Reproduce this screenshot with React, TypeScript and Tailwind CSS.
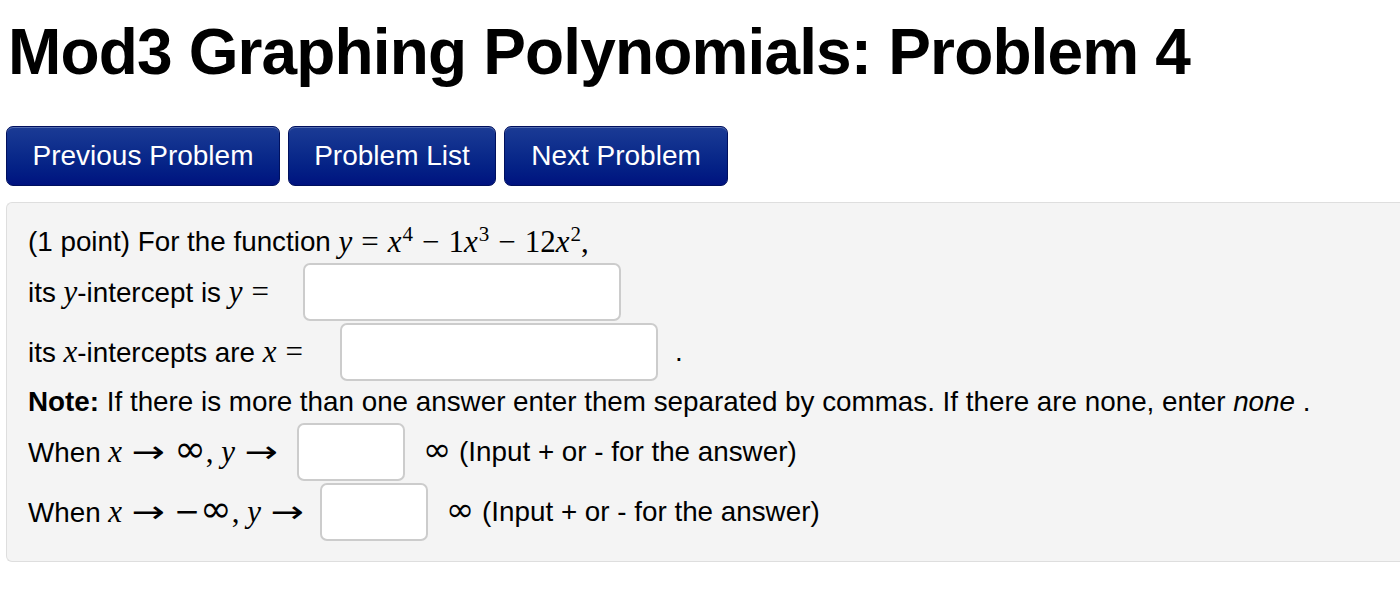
export default function App() {
  const sans = { fontFamily: '"Liberation Sans", Arial, sans-serif' };
  return (
    <div className="min-h-[608px] bg-white text-black" style={sans}>
      <h1 className="pl-[8px] pt-[16px] text-[64px] font-bold leading-[72px] tracking-[-0.85px]">
        Mod3 Graphing Polynomials: Problem 4
      </h1>

      <div className="mt-[38px] flex gap-[8px] pl-[6px]">
        <NavButton label="Previous Problem" w="w-[274px]" />
        <NavButton label="Problem List" w="w-[208px]" />
        <NavButton label="Next Problem" w="w-[224px]" />
      </div>

      <div className="ml-[6px] mt-[16px] rounded-l-[6px] border border-r-0 border-[#dedede] bg-[#f4f4f4] pb-[19px] pl-[21px] pt-[19px] text-[27.8px]">
        <div className="flex h-[40px] items-center">
          <span>(1 point) For the function&nbsp;</span>
          <M>
            <V>y</V>
            <Op>=</Op>
            <V>x</V>
            <Sup>4</Sup>
            <Op>−</Op>1<V>x</V>
            <Sup>3</Sup>
            <Op>−</Op>12<V>x</V>
            <Sup>2</Sup>,
          </M>
        </div>

        <Row>
          <span>
            its <MV>y</MV>-intercept is{" "}
            <M>
              <V>y</V>
              <Op>=</Op>
            </M>
          </span>
          <Field w="w-[318px]" className="ml-[25px]" />
        </Row>

        <Row>
          <span>
            its <MV>x</MV>-intercepts are{" "}
            <M>
              <V>x</V>
              <Op>=</Op>
            </M>
          </span>
          <Field w="w-[318px]" className="ml-[28px]" />
          <span className="ml-[17px]">.</span>
        </Row>

        <div className="flex h-[40px] items-center">
          <span>
            <b>Note:</b> If there is more than one answer enter them separated by commas. If there are none, enter <i>none</i> .
          </span>
        </div>

        <Row>
          <span>
            When{" "}
            <M>
              <V>x</V>
              <Arrow />
              <Inf />, <V>y</V>
              <Arrow />
            </M>
          </span>
          <Field w="w-[108px]" className="ml-[10px]" />
          <span className="ml-[18px]">
            <Inf text /> (Input + or - for the answer)
          </span>
        </Row>

        <Row>
          <span>
            When{" "}
            <M>
              <V>x</V>
              <Arrow />
              <span className="font-['DejaVu_Sans']">−</span>
              <Inf />, <V>y</V>
              <Arrow />
            </M>
          </span>
          <Field w="w-[108px]" className="ml-[7px]" />
          <span className="ml-[18px]">
            <Inf text /> (Input + or - for the answer)
          </span>
        </Row>
      </div>
    </div>
  );
}

function NavButton({ label, w }: { label: string; w: string }) {
  return (
    <button
      className={`${w} h-[60px] rounded-[7px] border border-[#00105e] bg-gradient-to-b from-[#1b3b95] to-[#00127f] text-[28px] text-white shadow-[inset_0_1px_0_rgba(255,255,255,0.25)]`}
    >
      {label}
    </button>
  );
}

function Row({ children }: { children: React.ReactNode }) {
  return <div className="flex h-[60px] items-center">{children}</div>;
}

function Field({ w, className = "" }: { w: string; className?: string }) {
  return (
    <div
      className={`${w} ${className} h-[58px] rounded-[7px] border-2 border-[#cccccc] bg-white`}
    />
  );
}

function M({ children }: { children: React.ReactNode }) {
  return (
    <span className="text-[31px]" style={{ fontFamily: '"Liberation Serif", "Times New Roman", serif' }}>
      {children}
    </span>
  );
}

function MV({ children }: { children: React.ReactNode }) {
  return (
    <M>
      <V>{children}</V>
    </M>
  );
}

function V({ children }: { children: React.ReactNode }) {
  return <i>{children}</i>;
}

function Op({ children }: { children: React.ReactNode }) {
  return <span className="mx-[9px]">{children}</span>;
}

function Arrow() {
  return (
    <span className="mx-[12px] inline-block w-[28px] scale-x-[1.33] text-center font-['DejaVu_Sans'] text-[30px] leading-none">
      →
    </span>
  );
}

function Inf({ text = false }: { text?: boolean }) {
  return (
    <span className={`font-['DejaVu_Sans'] leading-none ${text ? "text-[34px]" : "text-[38px]"}`}>∞</span>
  );
}

function Sup({ children }: { children: React.ReactNode }) {
  return <sup className="ml-[1px] text-[21px]">{children}</sup>;
}
